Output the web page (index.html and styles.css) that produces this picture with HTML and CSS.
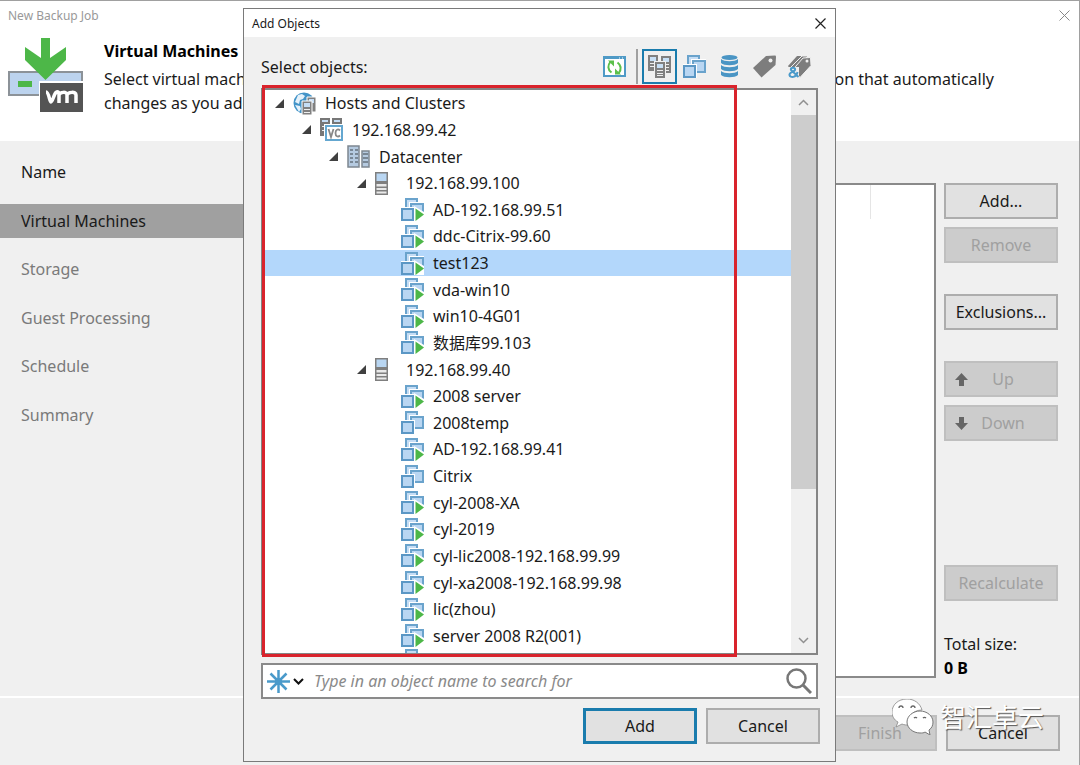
FILE: index.html
```html
<!DOCTYPE html>
<html lang="en">
<head>
    <meta charset="UTF-8">
    <meta name="viewport" content="width=device-width, initial-scale=1.0">
    <title>New Backup Job</title>
    <link rel="stylesheet" href="styles.css">
</head>
<body>
    <!-- Shared icons -->
    <svg class="sprites" aria-hidden="true">
        <symbol id="vm" viewBox="0 0 23 23">
            <path d="M5 1h11v9H5z" fill="#c5ddf5" stroke="#6aa3cc" stroke-width="2"/>
            <path d="M8 4h15v14H8z" fill="#fff"/>
            <path d="M10 6h12v11H10z" fill="#b9d6f2" stroke="#6aa3cc" stroke-width="2"/>
            <path d="M0 9h14v14H0z" fill="#fff"/>
            <path d="M1 11h11v11H1z" fill="#b9d6f2" stroke="#5b97c5" stroke-width="2"/>
        </symbol>
        <symbol id="vm-on" viewBox="0 0 23 23">
            <use href="#vm"/>
            <path d="M13 8l10 6v9H13z" fill="#fff"/>
            <path d="M14.500 10.500L23 16.500l-8.500 6.500z" fill="#4db748"/>
        </symbol>
        <symbol id="host" viewBox="0 0 13 23">
            <path d="M0 0h13v23H0z" fill="#7f7f7f"/>
            <path d="M1.500 1.500h10V9h-10z" fill="#b9d6f2"/>
            <path d="M1.500 12h10v2.500h-10zM1.500 16h10v2h-10zM1.500 19.500h10v2h-10z" fill="#e9e9e9"/>
        </symbol>
        <symbol id="arrow" viewBox="0 0 9 9">
            <path d="M9 0v9H0z" fill="#404040"/>
        </symbol>
    </svg>

    <div class="window">
        <div class="desktop-edge"></div>
        <header class="header">
            <div class="titlebar">
                <span>New Backup Job</span>
                <button class="close" aria-label="Close">
                    <svg width="11" height="11" viewBox="0 0 11 11"><path d="M.5.5l10 10M10.500.5l-10 10" stroke="#888" fill="none"/></svg>
                </button>
            </div>
            <div class="intro">
                <svg class="logo" width="76" height="76" viewBox="0 0 76 76">
                    <path d="M1 34h73v23H1z" fill="#bcd3ee" stroke="#8c9298" stroke-width="2"/>
                    <path d="M10 43h14v6H10z" fill="#4db748"/>
                    <path d="M33 0h9v20l16-11v13L37.500 42 17 22V9l16 11z" fill="#4db748"/>
                    <path d="M31 43h45v33H31z" fill="#fff"/>
                    <path d="M32 45h43v29H32z" fill="#545454"/>
                    <path d="M38 54c3 0 3.500 10 5 10s3-8 5-9.500 3 0 3 2V65m0-8c1-3 8-4 8 0v8m0-8c1-3 9-4 9 0v8" fill="none" stroke="#fff" stroke-width="3.500"/>
                </svg>
                <div class="intro-text">
                    <h1>Virtual Machines</h1>
                    <p><span>Select virtual machines.</span><span>Dynamic selection that automatically</span></p>
                    <p>changes as you add new VM.</p>
                </div>
            </div>
        </header>

        <main class="main">
            <nav class="steps">
                <a href="#" class="step done">Name</a>
                <a href="#" class="step current">Virtual Machines</a>
                <a href="#" class="step">Storage</a>
                <a href="#" class="step">Guest Processing</a>
                <a href="#" class="step">Schedule</a>
                <a href="#" class="step">Summary</a>
            </nav>
            <div class="job-list"><div class="column-line"></div></div>
            <div class="actions">
                <button class="btn">Add...</button>
                <button class="btn" disabled>Remove</button>
                <button class="btn apart">Exclusions...</button>
                <button class="btn move apart" disabled>
                    <svg width="13" height="13" viewBox="0 0 13 13"><path d="M6.500 0L13 7H9v6H4V7H0z" fill="#666"/></svg>
                    <span>Up</span>
                </button>
                <button class="btn move" disabled>
                    <svg width="13" height="13" viewBox="0 0 13 13"><path d="M6.500 13L13 6H9V0H4v6H0z" fill="#666"/></svg>
                    <span>Down</span>
                </button>
                <button class="btn recalc" disabled>Recalculate</button>
                <div class="total">Total size:<br><b>0 B</b></div>
            </div>
        </main>

        <footer class="footer">
            <button class="btn" disabled>Finish</button>
            <button class="btn">Cancel</button>
        </footer>
    </div>

    <section class="dialog" role="dialog" aria-labelledby="dialog-title">
        <div class="dialog-title">
            <span id="dialog-title">Add Objects</span>
            <button class="close" aria-label="Close dialog">
                <svg width="11" height="11" viewBox="0 0 11 11"><path d="M.5.5l10 10M10.500.5l-10 10" stroke="#222" stroke-width="1.200" fill="none"/></svg>
            </button>
        </div>
        <div class="dialog-body">
            <div class="toolbar">
                <span class="toolbar-label">Select objects:</span>
                <button class="tool refresh" aria-label="Refresh">
                    <svg width="23" height="21" viewBox="0 0 23 21">
                        <path d="M1 1h21v19H1z" fill="#fff" stroke="#4f9ac6" stroke-width="2"/>
                        <path d="M1 1h21v2H1z" fill="#4f9ac6"/>
                        <path d="M16 2h1M19 2h1" stroke="#fff"/>
                        <path d="M8.500 16.500c-4-3-4-7-1-11M14.500 6.500c4 3 4 7 1 11" fill="none" stroke="#5cc04b" stroke-width="2"/>
                        <path d="M5 4.500h6v6zM18 18.500h-6v-6z" fill="#5cc04b"/>
                    </svg>
                </button>
                <button class="tool active" aria-label="Hosts and Clusters">
                    <svg width="23" height="23" viewBox="0 0 23 23">
                        <path d="M0 0h10v16H0zM13 1h10v17H13z" fill="#808080"/>
                        <path d="M2 2h6v4H2zM15 3h6v4h-6z" fill="#c8e0f6"/>
                        <path d="M2 8h6v1H2zM2 11h6v1H2zM15 9h6v1h-6zM15 12h6v1h-6zM15 15h6v1h-6z" fill="#eee"/>
                        <path d="M6 6h12v17H6z" fill="#f0f0f0"/>
                        <path d="M7 7h10v16H7z" fill="#808080"/>
                        <path d="M9 9h6v4H9z" fill="#c8e0f6"/>
                        <path d="M9 15h6v1H9zM9 18h6v1H9zM9 20h6v1H9z" fill="#eee"/>
                    </svg>
                </button>
                <button class="tool" aria-label="VMs and Templates">
                    <svg width="23" height="23"><use href="#vm"/></svg>
                </button>
                <button class="tool" aria-label="Datastores and VMs">
                    <svg width="17" height="23" viewBox="0 0 17 23">
                        <ellipse cx="8.500" cy="2.500" rx="8" ry="2.500" fill="#4a95c4"/>
                        <path id="disk" d="M0 4c3 3 14 3 17 0v4c-3 3-14 3-17 0z" fill="#4a95c4"/>
                        <use href="#disk" y="6"/>
                        <use href="#disk" y="12"/>
                    </svg>
                </button>
                <button class="tool" aria-label="VMs and Tags">
                    <svg width="23" height="23" viewBox="0 0 23 23">
                        <path d="M13 1l9-.5q1 0 1 1L22.500 10 8.500 22.500 0 13z" fill="#7d7d7d"/>
                        <circle cx="17.500" cy="5.500" r="2" fill="#f0f0f0"/>
                    </svg>
                </button>
                <button class="tool" aria-label="Tag combinations">
                    <svg width="23" height="23" viewBox="0 0 23 23">
                        <path d="M9 1h6L2 14l-2-3z" fill="#7d7d7d"/>
                        <path d="M14 1h6L6 15l-3-3z" fill="#7d7d7d" stroke="#f0f0f0"/>
                        <path d="M15 3l7.500-.5.5 8-11 12-7-8z" fill="#7d7d7d" stroke="#f0f0f0"/>
                        <circle cx="19" cy="6" r="1.500" fill="#f0f0f0"/>
                        <path d="M0 12h11v11H0z" fill="#f0f0f0"/>
                        <path d="M10.500 22L3 15c-1-3 5-3 4 0-1 2-6 2-5.500 5 .5 3 7 3 8-3" fill="none" stroke="#4a9aca" stroke-width="2"/>
                    </svg>
                </button>
            </div>

            <div class="tree-box">
                <ul class="tree" role="tree">
                    <li class="row level0">
                        <button class="expander" aria-label="Collapse"><svg width="9" height="9"><use href="#arrow"/></svg></button>
                        <svg class="icon" viewBox="0 0 23 23">
                            <circle cx="11" cy="11" r="10.500" fill="#4394c8"/>
                            <path d="M5 3l4-1 3 2-2 3-3 1-1 4-4-2zM2 13l5 1 1 3-2 3z" fill="#e5f1fa"/>
                            <path d="M14 5h9v15h-9z" fill="#808080" stroke="#fff"/>
                            <path d="M16 7h5v4h-5z" fill="#c5ddf5"/>
                            <path d="M9 9h10v14H9z" fill="#808080" stroke="#fff"/>
                            <path d="M11 11h6v4h-6z" fill="#c5ddf5"/>
                            <path d="M11 17h6v1h-6zM11 20h6v1h-6z" fill="#eee"/>
                        </svg>
                        <span>Hosts and Clusters</span>
                    </li>
                    <li class="row level1">
                        <button class="expander" aria-label="Collapse"><svg width="9" height="9"><use href="#arrow"/></svg></button>
                        <svg class="icon" viewBox="0 0 23 23">
                            <path d="M0 0h10v18H0zM12 0h10v8H12z" fill="#777"/>
                            <path d="M2 2h6v2H2zM14 2h6v2h-6z" fill="#c5ddf5"/>
                            <path d="M2 8h3v1H2zM2 12h3v1H2z" fill="#eee"/>
                            <path d="M4 6h19v17H4z" fill="#fff"/>
                            <path d="M6 8h16v14H6z" fill="#fff" stroke="#64a7d0" stroke-width="2"/>
                            <path d="M8.500 11l2.500 8 2.500-8M20 12.500c-2-2-4.500-1-4.500 2.500s2.500 4.500 4.500 2.500" fill="none" stroke="#888" stroke-width="1.800"/>
                        </svg>
                        <span>192.168.99.42</span>
                    </li>
                    <li class="row level2">
                        <button class="expander" aria-label="Collapse"><svg width="9" height="9"><use href="#arrow"/></svg></button>
                        <svg class="icon" viewBox="0 0 23 23">
                            <path d="M1 1h11v21H1zM15 6h7v16h-7z" fill="#b5cae0" stroke="#7d8790" stroke-width="1.500"/>
                            <path d="M3 5h3m2 0h3M3 9h3m2 0h3M3 13h3m2 0h3M3 17h3m2 0h3M16 9h5M16 13h5M16 17h5" stroke="#65717c" stroke-width="1.500"/>
                        </svg>
                        <span>Datacenter</span>
                    </li>
                    <li class="row level3">
                        <button class="expander" aria-label="Collapse"><svg width="9" height="9"><use href="#arrow"/></svg></button>
                        <svg class="icon host"><use href="#host"/></svg>
                        <span>192.168.99.100</span>
                    </li>
                    <li class="row level4"><svg class="icon"><use href="#vm-on"/></svg><span>AD-192.168.99.51</span></li>
                    <li class="row level4"><svg class="icon"><use href="#vm-on"/></svg><span>ddc-Citrix-99.60</span></li>
                    <li class="row level4 selected"><svg class="icon"><use href="#vm-on"/></svg><span>test123</span></li>
                    <li class="row level4"><svg class="icon"><use href="#vm-on"/></svg><span>vda-win10</span></li>
                    <li class="row level4"><svg class="icon"><use href="#vm-on"/></svg><span>win10-4G01</span></li>
                    <li class="row level4"><svg class="icon"><use href="#vm-on"/></svg><span>数据库99.103</span></li>
                    <li class="row level3">
                        <button class="expander" aria-label="Collapse"><svg width="9" height="9"><use href="#arrow"/></svg></button>
                        <svg class="icon host"><use href="#host"/></svg>
                        <span>192.168.99.40</span>
                    </li>
                    <li class="row level4"><svg class="icon"><use href="#vm-on"/></svg><span>2008 server</span></li>
                    <li class="row level4"><svg class="icon"><use href="#vm"/></svg><span>2008temp</span></li>
                    <li class="row level4"><svg class="icon"><use href="#vm-on"/></svg><span>AD-192.168.99.41</span></li>
                    <li class="row level4"><svg class="icon"><use href="#vm"/></svg><span>Citrix</span></li>
                    <li class="row level4"><svg class="icon"><use href="#vm-on"/></svg><span>cyl-2008-XA</span></li>
                    <li class="row level4"><svg class="icon"><use href="#vm-on"/></svg><span>cyl-2019</span></li>
                    <li class="row level4"><svg class="icon"><use href="#vm-on"/></svg><span>cyl-lic2008-192.168.99.99</span></li>
                    <li class="row level4"><svg class="icon"><use href="#vm-on"/></svg><span>cyl-xa2008-192.168.99.98</span></li>
                    <li class="row level4"><svg class="icon"><use href="#vm-on"/></svg><span>lic(zhou)</span></li>
                    <li class="row level4"><svg class="icon"><use href="#vm-on"/></svg><span>server 2008 R2(001)</span></li>
                    <li class="row level4 cut"><svg class="icon"><use href="#vm-on"/></svg></li>
                </ul>
                <div class="scrollbar">
                    <button aria-label="Scroll up"><svg width="11" height="7" viewBox="0 0 11 7"><path d="M1 6l4.500-4.500L10 6" fill="none" stroke="#909090" stroke-width="1.500"/></svg></button>
                    <div class="track"><div class="thumb"></div></div>
                    <button aria-label="Scroll down"><svg width="11" height="7" viewBox="0 0 11 7"><path d="M1 1l4.500 4.500L10 1" fill="none" stroke="#909090" stroke-width="1.500"/></svg></button>
                </div>
                <div class="highlight"></div>
            </div>

            <div class="search">
                <button class="filter" aria-label="Object type">
                    <svg width="37" height="23" viewBox="0 0 37 23">
                        <path d="M11.500 0v23M0 11.500h23M3.500 3.500l16 16M19.500 3.500l-16 16" stroke="#4a9aca" stroke-width="2.500"/>
                        <circle cx="11.500" cy="11.500" r="3.500" fill="#4a9aca"/>
                        <path d="M27 9l4.500 4.500L36 9" fill="none" stroke="#111" stroke-width="2"/>
                    </svg>
                </button>
                <input type="text" aria-label="Search objects" placeholder="Type in an object name to search for">
                <button class="find" aria-label="Search">
                    <svg width="26" height="26" viewBox="0 0 26 26"><circle cx="10.500" cy="10.500" r="9" fill="none" stroke="#777" stroke-width="2.500"/><path d="M17 17l8 8" stroke="#777" stroke-width="3"/></svg>
                </button>
            </div>
            <div class="dialog-buttons">
                <button class="btn primary">Add</button>
                <button class="btn">Cancel</button>
            </div>
        </div>
    </section>

    <div class="watermark">
        <svg width="42" height="36" viewBox="0 0 42 36">
            <path d="M15 0C6 0 0 6 0 13c0 4 2 8 6 10l-2 5 6-3c2 1 5 1 7 1-2-8 4-15 13-15C28 4 22 0 15 0z" fill="#fff" stroke="#888" stroke-width=".8"/>
            <path d="M28 12c-7 0-13 5-13 11s6 11 13 11c2 0 4 0 5-1l5 3-1-5c3-2 4-5 4-8 0-6-6-11-13-11z" fill="#fff" stroke="#777"/>
            <path d="M7 9a2 2 0 014 0M19 9a2 2 0 014 0M22 19a2 2 0 013 0M31 19a2 2 0 013 0" fill="none" stroke="#666" stroke-width="1.300"/>
        </svg>
        <span>智汇卓云</span>
    </div>
</body>
</html>
```
FILE: styles.css
```css
*{
    box-sizing: border-box;
}
body{
    margin: 0;
    font-family: "Noto Sans", "Noto Sans CJK SC", sans-serif;
    font-size: 16px;
    color: #1a1a1a;
    overflow: hidden;
}
button{
    font: inherit;
    color: inherit;
    padding: 0;
    border: none;
    background: none;
}
svg{
    display: block;
    flex: none;
}
.sprites{
    position: absolute;
    width: 0;
    height: 0;
}

/* Wizard window */
.window{
    display: flex;
    flex-direction: column;
    height: 100vh;
    background: #f0f0f0;
    border-right: 1px solid #a0a0a0;
}
.desktop-edge{
    height: 1px;
    background: #a0a0a0;
}
.header{
    height: 140px;
    background: #fff;
}
.titlebar{
    display: flex;
    justify-content: space-between;
    align-items: center;
    height: 28px;
    padding: 0 9px 0 8px;
    font-size: 12px;
    color: #999;
}
.intro{
    display: flex;
    gap: 20px;
    padding: 9px 85px 0 8px;
}
.intro-text{
    flex: 1;
    line-height: 24px;
    white-space: nowrap;
}
.intro-text h1{
    margin: 1px 0 4px;
    font-size: 16px;
    line-height: 24px;
    color: #000;
}
.intro-text p{
    display: flex;
    justify-content: space-between;
    margin: 0;
}
.main{
    flex: 1;
    display: flex;
    min-height: 0;
    border-bottom: 2px solid #fff;
}
.steps{
    display: flex;
    flex-direction: column;
    justify-content: space-between;
    width: 244px;
    height: 277px;
    margin-top: 14px;
}
.step{
    height: 34px;
    padding-left: 21px;
    line-height: 34px;
    color: #7a7a7a;
    text-decoration: none;
}
.step.done{
    color: #1a1a1a;
}
.step.current{
    background: #a0a0a0;
    color: #1a1a1a;
}
.job-list{
    flex: 1;
    display: flex;
    justify-content: flex-end;
    margin: 42px 8px 18px 16px;
    padding-right: 63px;
    border: 2px solid #8a8a8a;
    background: #fff;
}
.column-line{
    height: 34px;
    border-right: 1px solid #e5e5e5;
}
.actions{
    display: flex;
    flex-direction: column;
    gap: 8px;
    padding: 42px 21px 16px 0;
}
.btn{
    width: 114px;
    height: 36px;
    border: 2px solid #adadad;
    background: #e1e1e1;
}
.btn:disabled{
    border-color: #bfbfbf;
    background: #cccccc;
    color: #a0a0a0;
}
.btn.apart{
    margin-top: 23px;
}
.btn.move{
    display: flex;
    align-items: center;
    padding: 0 9px;
}
.btn.move span{
    flex: 1;
    padding-right: 9px;
}
.btn.recalc{
    margin-top: auto;
}
.total{
    margin-top: 23px;
    line-height: 24px;
}
.total b{
    color: #000;
}
.footer{
    display: flex;
    justify-content: flex-end;
    gap: 9px;
    padding: 17px 19px 14px;
}

/* Add Objects dialog */
.dialog{
    position: absolute;
    top: 8px;
    right: 244px;
    bottom: 3px;
    left: 243px;
    display: flex;
    flex-direction: column;
    border: 1px solid #7a7a7a;
    background: #f0f0f0;
}
.dialog-title{
    display: flex;
    justify-content: space-between;
    align-items: center;
    height: 28px;
    padding: 0 9px 0 8px;
    background: #fff;
    font-size: 12px;
}
.dialog-body{
    flex: 1;
    display: flex;
    flex-direction: column;
    min-height: 0;
    padding: 11px 17px 17px;
}
.toolbar{
    display: flex;
    align-items: center;
    height: 36px;
    margin-bottom: 4px;
    padding-right: 1px;
}
.toolbar-label{
    flex: 1;
    padding-top: 2px;
}
.tool{
    display: flex;
    justify-content: center;
    align-items: center;
    width: 35px;
    height: 35px;
}
.tool.refresh{
    width: 35px;
    margin-right: 4px;
    padding-right: 10px;
    border-right: 2px solid #a0a0a0;
}
.tool.active{
    border: 2px solid #1a7cad;
}
.tree-box{
    position: relative;
    flex: 1;
    display: flex;
    min-height: 0;
    border: 2px solid #858585;
    background: #fff;
}
.tree{
    flex: 1;
    display: flex;
    flex-direction: column;
    margin: 0;
    padding: 0;
    list-style: none;
    overflow: hidden;
}
.row{
    flex: 1;
    display: flex;
    align-items: center;
    min-height: 0;
    gap: 9px;
    line-height: 24px;
}
.row.selected{
    background: #b3d7fb;
}
.row.cut{
    flex: 0 0 4px;
    align-items: flex-start;
    overflow: hidden;
}
.level0{ padding-left: 12px; }
.level1{ padding-left: 39px; }
.level2{ padding-left: 66px; }
.level3{ padding-left: 94px; }
.level4{ padding-left: 138px; }
.icon{
    width: 23px;
    height: 23px;
}
.icon.host{
    width: 13px;
    margin-right: 9px;
}
.scrollbar{
    display: flex;
    flex-direction: column;
    width: 25px;
    background: #f0f0f0;
}
.scrollbar button{
    display: flex;
    justify-content: center;
    align-items: center;
    height: 25px;
}
.track{
    flex: 1;
}
.thumb{
    height: 73%;
    background: #cdcdcd;
}
.highlight{
    position: absolute;
    top: -5px;
    right: 79px;
    bottom: -4px;
    left: -1px;
    border: 3px solid #d9232c;
    pointer-events: none;
}
.search{
    display: flex;
    align-items: center;
    height: 36px;
    margin: 8px 0 9px;
    padding: 0 4px;
    border: 2px solid #8a8a8a;
    background: #fff;
}
.search input{
    flex: 1;
    min-width: 0;
    padding: 0 10px;
    border: none;
    outline: none;
    background: none;
    font: inherit;
}
.search input::placeholder{
    color: #8a8a8a;
    font-style: italic;
}
.dialog-buttons{
    display: flex;
    justify-content: flex-end;
    gap: 9px;
    margin-right: -2px;
}
.btn.primary{
    border: 3px solid #1a7cad;
}

/* Channel mark over the bottom corner */
.watermark{
    position: absolute;
    right: 36px;
    bottom: 29px;
    display: flex;
    align-items: center;
    gap: 6px;
    color: #fff;
    font-size: 26px;
    line-height: 38px;
    text-shadow: 1px 1px 1px #555;
    pointer-events: none;
}
```
